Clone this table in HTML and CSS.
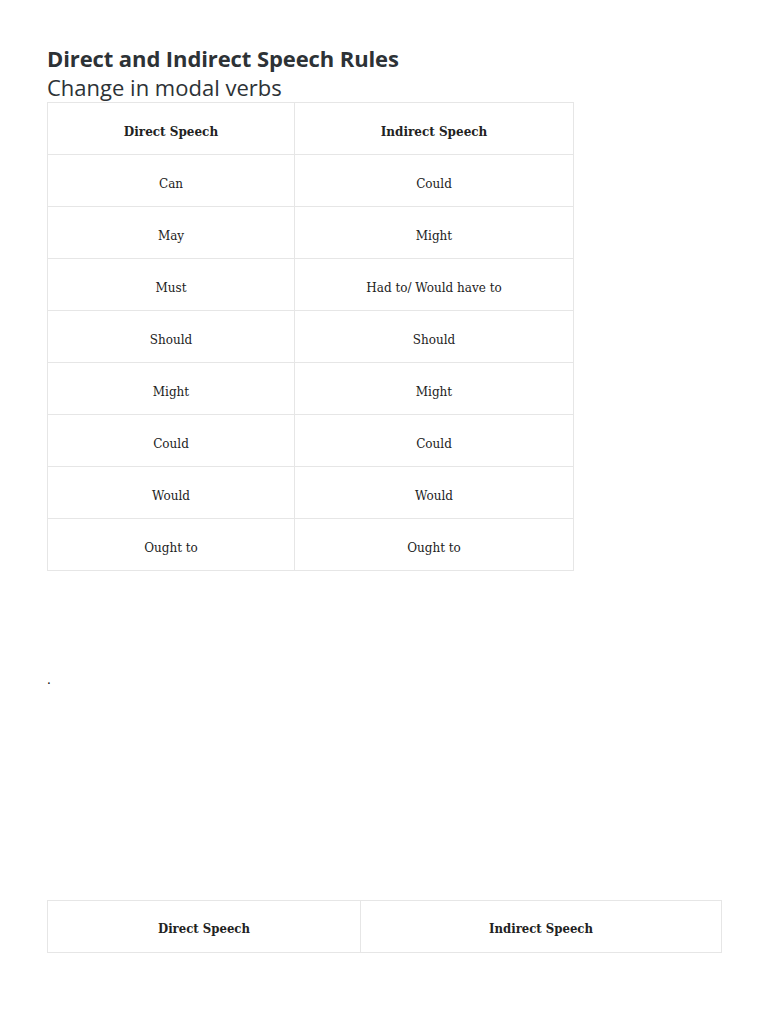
FILE: index.html
```html
<!DOCTYPE html>
<html>
<head>
<meta charset="utf-8">
<link rel="stylesheet" href="styles.css">
</head>
<body>
<div class="page">
  <h1 class="title">Direct and Indirect Speech Rules</h1>
  <h2 class="subtitle">Change in modal verbs</h2>
  <table class="tbl tbl-a">
    <tr><th>Direct Speech</th><th>Indirect Speech</th></tr>
    <tr><td>Can</td><td>Could</td></tr>
    <tr><td>May</td><td>Might</td></tr>
    <tr><td>Must</td><td>Had to/ Would have to</td></tr>
    <tr><td>Should</td><td>Should</td></tr>
    <tr><td>Might</td><td>Might</td></tr>
    <tr><td>Could</td><td>Could</td></tr>
    <tr><td>Would</td><td>Would</td></tr>
    <tr><td>Ought to</td><td>Ought to</td></tr>
  </table>
  <p class="dot">.</p>
  <table class="tbl tbl-b">
    <tr><th class="b1">Direct Speech</th><th>Indirect Speech</th></tr>
  </table>
</div>
</body>
</html>
```
FILE: styles.css
```css
html, body { margin: 0; padding: 0; background: #fff; }
.page { padding: 44px 47px 0 47px; }
.title {
  font-family: "Open Sans", "Noto Sans", sans-serif;
  font-weight: 700;
  font-size: 22px;
  line-height: 28px;
  color: #2d3236;
  margin: 0;
  letter-spacing: -0.1px;
}
.subtitle {
  font-family: "Open Sans", "Noto Sans", sans-serif;
  font-weight: 400;
  font-size: 22px;
  line-height: 30px;
  color: #2d3236;
  margin: 0;
}
.tbl {
  border-collapse: collapse;
  font-family: "DejaVu Serif", serif;
  color: #222;
}
.tbl th, .tbl td {
  border: 1px solid #e6e6e6;
  height: 52px;
  box-sizing: border-box;
  padding: 6px 0 0 0;
  text-align: center;
  font-size: 12px;
}
.tbl th { font-weight: 700; }
.tbl-a { width: 527px; }
.tbl-a th:first-child, .tbl-a td:first-child { width: 247px; }
.dot {
  margin: 101px 0 0 0;
  font-family: "DejaVu Serif", serif;
  font-size: 12px;
  line-height: 16px;
}
.tbl-b { width: 675px; margin-top: 212px; }
.tbl-b th {
  font-family: "DejaVu Serif Condensed", "DejaVu Serif", serif;
  font-size: 13px;
  padding-top: 4px;
}
.tbl-b .b1 { width: 313px; }
```
